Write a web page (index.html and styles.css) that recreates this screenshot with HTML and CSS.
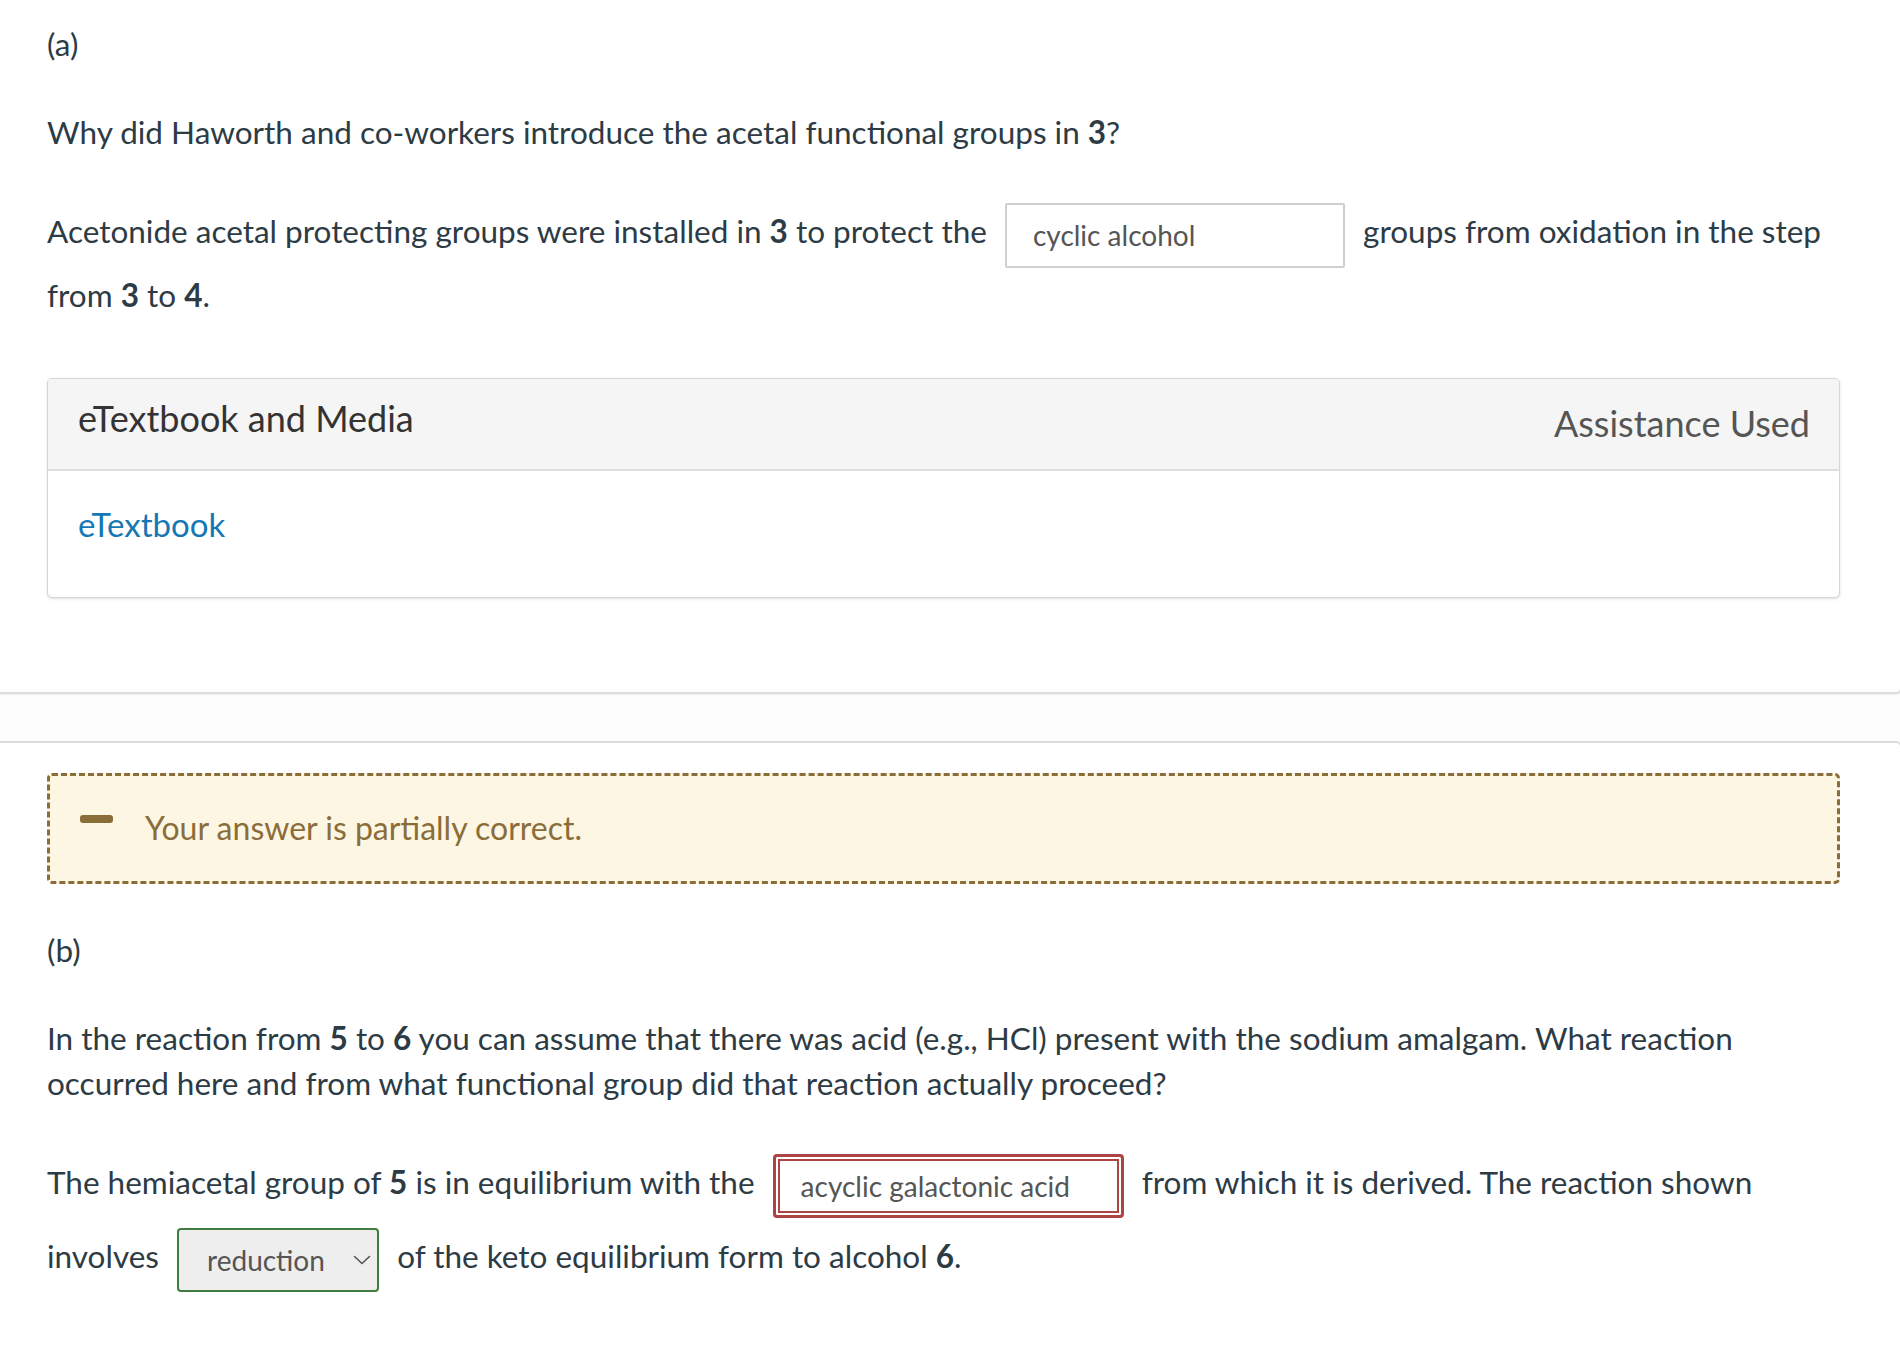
FILE: index.html
```html
<!DOCTYPE html>
<html lang="en">
<head>
<meta charset="utf-8">
<title>Question</title>
<link rel="stylesheet" href="styles.css">
</head>
<body>
<div class="panel panel-top">
  <p class="label">(a)</p>
  <p>Why did Haworth and co-workers introduce the acetal functional groups in <b>3</b>?</p>
  <p class="fill fill-a">Acetonide acetal protecting groups were installed in <b>3</b> to protect the <input class="answer answer-a" type="text" value="cyclic alcohol" readonly> groups from oxidation in the step<br>from <b>3</b> to <b>4</b>.</p>
  <section class="card">
    <header class="card-head">
      <h2 class="card-title">eTextbook and Media</h2>
      <span class="assist">Assistance Used</span>
    </header>
    <div class="card-body"><a class="link" href="#">eTextbook</a></div>
  </section>
</div>
<div class="panel panel-bottom">
  <div class="feedback"><span class="minus"></span><span class="feedback-text">Your answer is partially correct.</span></div>
  <p class="label">(b)</p>
  <p>In the reaction from <b>5</b> to <b>6</b> you can assume that there was acid (e.g., HCl) present with the sodium amalgam. What reaction<br>occurred here and from what functional group did that reaction actually proceed?</p>
  <p class="fill">The hemiacetal group of <b>5</b> is in equilibrium with the <input class="answer answer-wrong" type="text" value="acyclic galactonic acid" readonly> from which it is derived. The reaction shown<br>involves <span class="select"><span class="select-text">reduction</span><svg class="chev" width="18" height="10" viewBox="0 0 18 10"><polyline points="1.5,1.5 9,8.5 16.5,1.5" fill="none" stroke="#555" stroke-width="1.6" stroke-linecap="round" stroke-linejoin="round"/></svg></span> of the keto equilibrium form to alcohol <b>6</b>.</p>
</div>
</body>
</html>
```

FILE: styles.css
```css
html, body {
  margin: 0;
  padding: 0;
}
body {
  font-family: Lato, "Noto Sans", "Liberation Sans", sans-serif;
  font-size: 31.5px;
  line-height: 44.8px;
  color: #2d3b45;
  background: #fdfdfd;
  height: 1348px;
  overflow: hidden;
}
b {
  font-weight: 700;
}
p {
  margin: 0 0 43px;
}
.panel {
  margin: 0 -2px 0 -20px;
  border: 2px solid #dcdcdc;
  background: #fff;
  padding: 0 60px 0 65px;
  box-shadow: 0 1px 2px rgba(0, 0, 0, 0.06);
}
.panel-top {
  border-top: 0;
  border-radius: 0 0 6px 6px;
  padding-top: 22px;
  padding-bottom: 94px;
}
.panel-bottom {
  margin-top: 47px;
  border-bottom: 0;
  border-radius: 6px 6px 0 0;
  padding-top: 30px;
  min-height: 700px;
}
.fill-a {
  margin-bottom: 61px;
}
.answer {
  font-family: Lato, "Noto Sans", sans-serif;
  font-size: 28px;
  color: #555;
  height: 64px;
  box-sizing: border-box;
  margin: 5px 10px;
  vertical-align: middle;
  padding: 0 0 0 26px;
  border: 2px solid #cfcfcf;
  border-radius: 2px;
  background: #fff;
  outline: none;
}
.answer-a {
  width: 340px;
  height: 65px;
}
.answer-wrong {
  width: 351px;
  border: 3px solid #ad4343;
  border-radius: 4px;
  box-shadow: inset 0 0 0 2px #fff, inset 0 0 0 4px #ad4343;
  padding-left: 25px;
}
.select {
  display: inline-flex;
  align-items: center;
  justify-content: space-between;
  box-sizing: border-box;
  width: 202px;
  height: 64px;
  margin: 5px 10px;
  vertical-align: middle;
  border: 2px solid #3f7d3f;
  border-radius: 4px;
  background: #eeeeee;
  padding: 0 6px 0 28px;
  font-size: 28px;
  line-height: 1;
  color: #555;
}
.chev {
  display: block;
  flex: none;
}
.card {
  border: 1px solid #d6d6d6;
  border-radius: 5px;
  box-shadow: 0 1px 3px rgba(0, 0, 0, 0.13);
  overflow: hidden;
  background: #fff;
}
.card-head {
  display: flex;
  justify-content: space-between;
  align-items: flex-start;
  height: 92px;
  box-sizing: border-box;
  padding: 18px 29px 0 30px;
  background: #f5f5f5;
  border-bottom: 2px solid #dedede;
}
.card-title {
  margin: 0;
  font-size: 36px;
  font-weight: 400;
  line-height: 1.2;
  color: #333;
}
.assist {
  font-size: 36px;
  line-height: 1.2;
  color: #555;
  margin-top: 5px;
}
.card-body {
  height: 126px;
  box-sizing: border-box;
  padding: 27px 30px 0;
  font-size: 33px;
  line-height: 1.6;
}
.link {
  color: #1577b3;
  text-decoration: none;
}
.feedback {
  display: flex;
  align-items: flex-start;
  border: 3px dashed #8b6d3a;
  border-radius: 5px;
  background: #fdf6e3;
  padding: 30px 30px;
  font-size: 32px;
  color: #8b6d3a;
  margin-bottom: 44px;
}
.minus {
  flex: none;
  width: 33px;
  height: 8px;
  border-radius: 3px;
  background: #8b6d3a;
  margin: 9px 32px 0 0;
}
```
